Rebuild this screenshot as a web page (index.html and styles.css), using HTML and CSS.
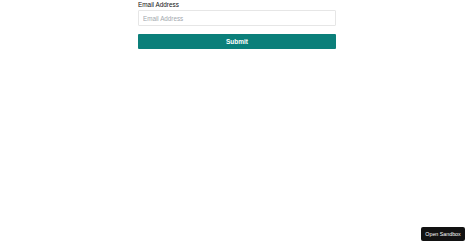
FILE: index.html
```html
<!DOCTYPE html>
<html>
<head>
<meta charset="utf-8">
<link rel="stylesheet" href="styles.css">
</head>
<body>
<form class="form">
  <label class="label" for="email">Email Address</label>
  <input class="input" id="email" type="email" placeholder="Email Address">
  <button class="submit" type="button">Submit</button>
</form>
<button class="sandbox" type="button">Open Sandbox</button>
</body>
</html>
```
FILE: styles.css
```css
html, body {
  margin: 0;
  padding: 0;
  background: #fff;
  font-family: "Liberation Sans", Arial, sans-serif;
}
.form {
  width: 198px;
  margin: 0 auto;
  display: flex;
  flex-direction: column;
}
.label {
  font-size: 6.4px;
  line-height: 10px;
  color: #111;
}
.input {
  box-sizing: border-box;
  margin: 0;
  height: 16px;
  border: 1px solid #e6e6e6;
  border-radius: 1px;
  padding: 0 4px;
  font-family: inherit;
  font-size: 6.3px;
  color: #333;
  outline: none;
}
.input::placeholder {
  color: #a2a7ad;
}
.submit {
  box-sizing: border-box;
  margin-top: 8px;
  height: 15px;
  border: none;
  border-radius: 1px;
  background: #0b7f7a;
  color: #fff;
  font-family: inherit;
  font-weight: bold;
  font-size: 6.5px;
  padding: 0;
}
.sandbox {
  position: fixed;
  right: 9px;
  bottom: 7px;
  box-sizing: border-box;
  width: 44px;
  height: 14px;
  padding: 0;
  border: none;
  border-radius: 2px;
  background: #121212;
  color: #fff;
  font-family: inherit;
  font-size: 5.3px;
}
```
